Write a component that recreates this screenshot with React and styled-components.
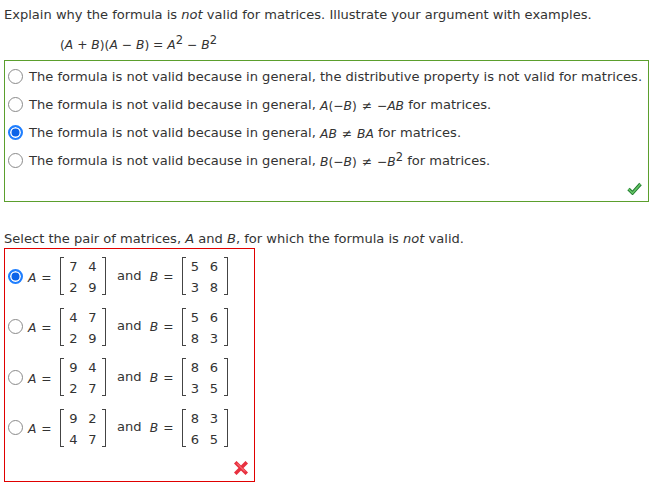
import styled, { createGlobalStyle } from "styled-components";

const GlobalStyle = createGlobalStyle`
  body {
    margin: 0;
    background: #fff;
    color: #333;
    font-family: "DejaVu Sans", Verdana, sans-serif;
    font-size: 13.05px;
  }
`;

const Page = styled.div`
  width: 672px;
  height: 498px;
  padding: 7px 0 0 4px;
  box-sizing: border-box;
  overflow: hidden;
`;

const Prompt = styled.p`
  margin: 0;
  line-height: 16px;
  white-space: nowrap;
`;

const Formula = styled.div`
  margin: 13px 0 0 56px;
  height: 18px;
  line-height: 18px;
  white-space: nowrap;
`;

const Math = styled.span`
  font-size: 12.3px;
  white-space: pre;
  sup {
    font-size: 11.5px;
    line-height: 0;
    vertical-align: 5px;
  }
`;

const InlineMath = styled(Math)`
  word-spacing: 1px;
  line-height: 0;
  vertical-align: -1px;
`;

const AnswerBox = styled.div`
  position: relative;
  box-sizing: border-box;
  border: 1px solid ${({ $ok }) => ($ok ? "#5b9f2d" : "#e00000")};
  width: ${({ $width }) => $width}px;
  height: ${({ $height }) => $height}px;
  margin-top: ${({ $top }) => $top}px;
`;

const TextOptions = styled.div`
  display: flex;
  flex-direction: column;
  padding: 1px 0 0 3px;
`;

const TextOption = styled.label`
  display: flex;
  align-items: center;
  gap: 6px;
  height: 28px;
  white-space: nowrap;
`;

const Radio = styled.span`
  flex: none;
  box-sizing: border-box;
  width: 15px;
  height: 15px;
  border-radius: 50%;
  background: ${({ $checked }) => ($checked ? "#0b63e8" : "#fff")};
  border: ${({ $checked }) => ($checked ? "2px solid #1f7fff" : "1.5px solid #8a8a8a")};
  box-shadow: ${({ $checked }) => ($checked ? "inset 0 0 0 1.5px #fff" : "none")};
`;

const SecondPrompt = styled(Prompt)`
  margin-top: 29px;
`;

const MatrixBox = styled.div`
  padding: 8px 0 0 3px;
`;

const MatrixOption = styled.label`
  display: flex;
  align-items: center;
  height: 38px;
  margin-bottom: 12.5px;
  white-space: nowrap;
`;

const Lhs = styled.span`
  margin-left: 5px;
  width: 32px;
`;

const And = styled.span`
  margin: 0 8px 0 11px;
  padding-bottom: 2px;
`;

const Matrix = styled.span`
  display: grid;
  grid-template-columns: 19px 19px;
  grid-auto-rows: 21px;
  align-content: center;
  justify-items: center;
  align-items: center;
  width: 46px;
  height: 38px;
  box-sizing: border-box;
  padding: 2px 4px 0;
  position: relative;
  &::before,
  &::after {
    content: "";
    position: absolute;
    top: 0;
    bottom: 0;
    width: 3px;
    border: 1px solid #444;
  }
  &::before {
    left: 0;
    border-right: 0;
  }
  &::after {
    right: 0;
    border-left: 0;
  }
`;

const Mark = styled.svg`
  position: absolute;
  right: 6px;
  bottom: 6px;
`;

const Check = () => (
  <Mark width="15" height="13" viewBox="0 0 15 13">
    <path d="M1.5 7 L5.5 11 L13.5 2" fill="none" stroke="#1f7a2e" strokeWidth="3.4" />
    <path d="M1.5 7 L5.5 11 L13.5 2" fill="none" stroke="#66c466" strokeWidth="1.6" />
  </Mark>
);

const Cross = () => (
  <Mark width="14" height="14" viewBox="0 0 14 14">
    <path d="M2.5 2.5 L11.5 11.5 M11.5 2.5 L2.5 11.5" stroke="#e8303f" strokeWidth="3.6" strokeLinecap="square" />
    <path d="M3 2.5 L11 10.5" stroke="#ff8a8f" strokeWidth="1" />
  </Mark>
);

const textOptions = [
  { text: <>the distributive property is not valid for matrices.</> },
  {
    text: (
      <>
        <InlineMath><i>A</i>(−<i>B</i>) ≠ −<i>AB</i></InlineMath> for matrices.
      </>
    ),
  },
  {
    checked: true,
    text: (
      <>
        <InlineMath><i>AB</i> ≠ <i>BA</i></InlineMath> for matrices.
      </>
    ),
  },
  {
    text: (
      <>
        <InlineMath><i>B</i>(−<i>B</i>) ≠ −<i>B</i><sup>2</sup></InlineMath> for matrices.
      </>
    ),
  },
];

const matrixOptions = [
  { a: [7, 4, 2, 9], b: [5, 6, 3, 8], checked: true },
  { a: [4, 7, 2, 9], b: [5, 6, 8, 3] },
  { a: [9, 4, 2, 7], b: [8, 6, 3, 5] },
  { a: [9, 2, 4, 7], b: [8, 3, 6, 5] },
];

const Cells = ({ values }) => (
  <Matrix>
    {values.map((v, i) => (
      <span key={i}>{v}</span>
    ))}
  </Matrix>
);

export default function App() {
  return (
    <Page>
      <GlobalStyle />
      <Prompt>
        Explain why the formula is <i>not</i> valid for matrices. Illustrate your argument with examples.
      </Prompt>
      <Formula>
        <Math>
          (<i>A</i> + <i>B</i>)(<i>A</i> − <i>B</i>) = <i>A</i><sup>2</sup> − <i>B</i><sup>2</sup>
        </Math>
      </Formula>
      <AnswerBox $ok $width={645} $height={142} $top={6}>
        <TextOptions>
          {textOptions.map((o, i) => (
            <TextOption key={i}>
              <Radio $checked={o.checked} />
              <span>The formula is not valid because in general, {o.text}</span>
            </TextOption>
          ))}
        </TextOptions>
        <Check />
      </AnswerBox>
      <SecondPrompt>
        Select the pair of matrices, <i>A</i> and <i>B</i>, for which the formula is <i>not</i> valid.
      </SecondPrompt>
      <AnswerBox $width={251} $height={234} $top={1}>
        <MatrixBox>
          {matrixOptions.map((o, i) => (
            <MatrixOption key={i}>
              <Radio $checked={o.checked} />
              <Lhs><InlineMath><i>A</i> =</InlineMath></Lhs>
              <Cells values={o.a} />
              <And>and&nbsp; <InlineMath><i>B</i> =</InlineMath></And>
              <Cells values={o.b} />
            </MatrixOption>
          ))}
        </MatrixBox>
        <Cross />
      </AnswerBox>
    </Page>
  );
}
